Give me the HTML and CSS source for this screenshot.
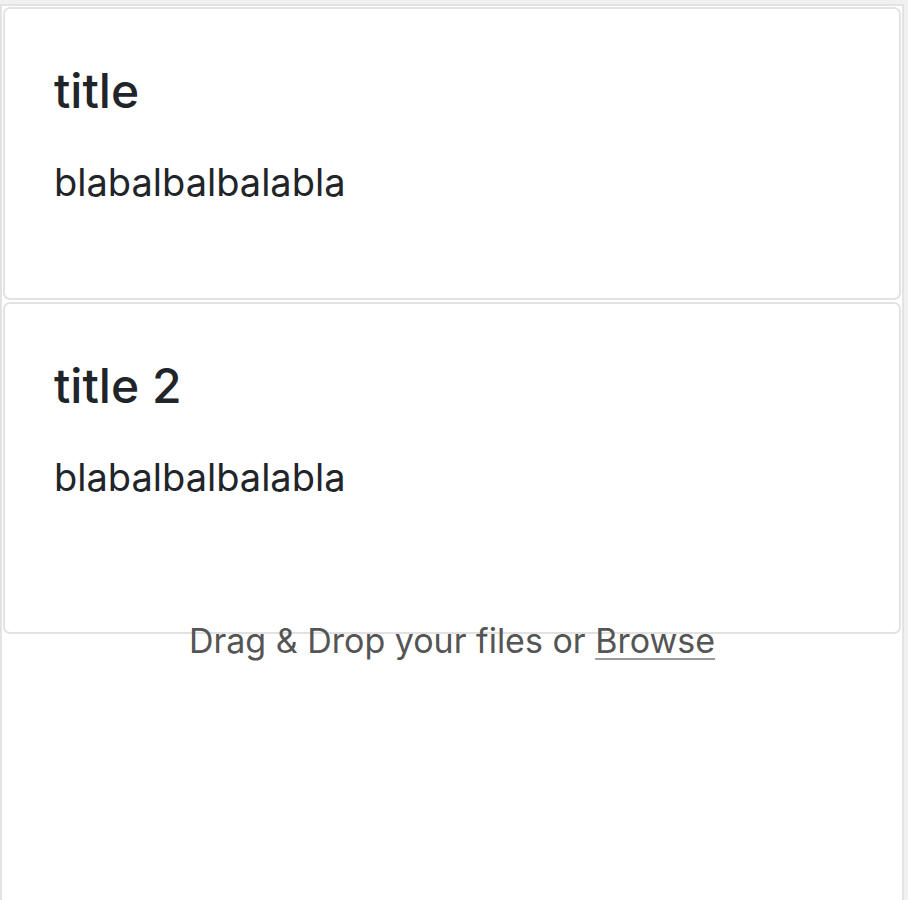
FILE: index.html
```html
<!DOCTYPE html>
<html lang="en">
<head>
<meta charset="utf-8">
<title>Cards</title>
<link rel="stylesheet" href="styles.css">
</head>
<body>
<div class="zone">
  <div class="card card-first">
    <h5 class="card-title">title</h5>
    <p class="card-text">blabalbalbalabla</p>
  </div>
  <div class="card card-second">
    <h5 class="card-title">title 2</h5>
    <p class="card-text">blabalbalbalabla</p>
  </div>
  <div class="drop-label">Drag &amp; Drop your files or <span class="browse">Browse</span></div>
</div>
</body>
</html>
```
FILE: styles.css
```css
html, body {
  margin: 0;
  padding: 0;
}
body {
  background: #f1f1f1;
  font-family: Inter, "Noto Sans", sans-serif;
  color: #212529;
  padding: 4px 4px 0 0;
}
.zone {
  background: #fff;
  border: 2px solid #e2e2e2;
  border-bottom: none;
  height: 896px;
  padding: 1px;
  box-sizing: border-box;
}
.card {
  position: relative;
  z-index: 1;
  border: 2px solid #e2e2e2;
  border-radius: 7px;
  padding: 53px 50px 0 49px;
  box-sizing: border-box;
  margin-bottom: 2px;
}
.card-first { height: 293px; }
.card-second { height: 332px; }
.card-title {
  margin: 0;
  font-size: 48px;
  line-height: 58px;
  font-weight: 500;
}
.card-text {
  margin: 34px 0 0 0;
  font-size: 38px;
  line-height: 57px;
}
.drop-label {
  position: relative;
  z-index: 2;
  margin-top: -19px;
  text-align: center;
  font-size: 34px;
  line-height: 48px;
  color: #555;
}
.browse {
  text-decoration: underline;
  text-decoration-color: #9a9a9a;
  text-decoration-thickness: 2px;
  text-underline-offset: 5px;
}
```
